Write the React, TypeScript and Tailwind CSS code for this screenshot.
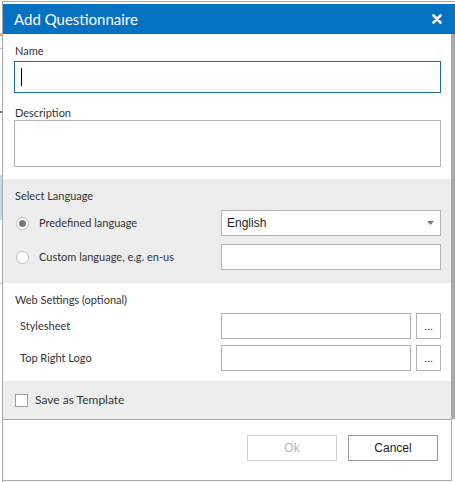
import React from "react";

function Radio({ checked }: { checked?: boolean }) {
  return (
    <span className="flex h-[13px] w-[13px] items-center justify-center rounded-full border border-[#b9b9b9] bg-white">
      {checked && <span className="h-[7px] w-[7px] rounded-full bg-[#7a7a7a]" />}
    </span>
  );
}

function TextBox({ w = "w-[220px]" }: { w?: string }) {
  return <div className={`h-[26px] ${w} border border-[#b4b4b4] bg-white`} />;
}

export default function App() {
  return (
    <div className="flex h-[482px] w-[455px] overflow-hidden bg-white font-['Lato',sans-serif] text-[#333]">
      {/* page behind */}
      <div className="flex w-[2px] flex-col bg-white">
        <div className="h-[33px]" />
        <div className="h-[3px] bg-[#e8a87c]" />
        <div className="h-[12px]" />
        <div className="h-[1px] bg-[#c8c8c8]" />
        <div className="h-[62px]" />
        <div className="h-[2px] bg-[#6a7a8a]" />
        <div className="h-[62px]" />
        <div className="h-[45px] bg-[#c9d9ea]" />
        <div className="h-[63px]" />
        <div className="h-[1px] bg-[#c8c8c8]" />
      </div>
      {/* modal */}
      <div className="mt-[1px] flex w-[453px] flex-col border-l border-t border-[#a9a9a9]">
        <div className="h-[2px] bg-white" />
        <div className="flex h-[30px] items-center justify-between bg-[#0571c1] pl-[11px] pr-[13px]">
          <span className="text-[15px] leading-none text-white">Add Questionnaire</span>
          <svg width="10" height="10" viewBox="0 0 10 10">
            <path d="M1.5 1.5 L8.5 8.5 M8.5 1.5 L1.5 8.5" stroke="white" strokeWidth="2.6" strokeLinecap="round" />
          </svg>
        </div>
        <div className="flex">
          <div className="flex w-[448px] flex-col">
            {/* Name / Description */}
            <div className="flex flex-col pl-[11px] pr-[10px] pt-[10px]">
              <div className="h-[17px] pl-[1px] text-[11px] leading-[14px]">Name</div>
              <div className="flex h-[32px] items-center border border-[#1d6a96] pl-[6px]">
                <span className="h-[18px] w-[1px] bg-black" />
              </div>
              <div className="mt-[13px] h-[14px] pl-[1px] text-[11px] leading-[14px]">Description</div>
              <div className="h-[47px] border border-[#b4b4b4]" />
            </div>
            {/* Select language */}
            <div className="mt-[12px] flex h-[104px] flex-col bg-[#ededed] pl-[11px] pr-[10px]">
              <div className="mt-[10px] h-[14px] pl-[1px] text-[11px] leading-[14px]">Select Language</div>
              <div className="mt-[7px] flex h-[26px] items-center">
                <div className="flex flex-1 items-center pl-[2px]">
                  <Radio checked />
                  <span className="ml-[10px] text-[11px]">Predefined language</span>
                </div>
                <div className="flex h-[26px] w-[220px] items-center justify-between border border-[#b4b4b4] bg-white pl-[5px] pr-[6px]">
                  <span className="font-['Liberation_Sans',Arial,sans-serif] text-[12px] text-[#222]">English</span>
                  <svg width="7" height="4" viewBox="0 0 7 4">
                    <path d="M0 0 L7 0 L3.5 4 Z" fill="#7a7a7a" />
                  </svg>
                </div>
              </div>
              <div className="mt-[8px] flex h-[26px] items-center">
                <div className="flex flex-1 items-center pl-[2px]">
                  <Radio />
                  <span className="ml-[10px] text-[11px]">Custom language, e.g. en-us</span>
                </div>
                <TextBox />
              </div>
            </div>
            {/* Web settings */}
            <div className="flex h-[98px] flex-col pl-[11px] pr-[10px]">
              <div className="mt-[10px] h-[14px] pl-[1px] text-[11px] leading-[14px]">Web Settings (optional)</div>
              <div className="mt-[6px] flex h-[26px] items-center">
                <span className="flex-1 pl-[6px] text-[11px]">Stylesheet</span>
                <TextBox w="w-[190px]" />
                <div className="ml-[5px] flex h-[26px] w-[25px] items-center justify-center border border-[#b4b4b4] bg-white font-['Liberation_Sans',Arial,sans-serif] text-[11px] leading-none text-[#333]">...</div>
              </div>
              <div className="mt-[6px] flex h-[26px] items-center">
                <span className="flex-1 pl-[6px] text-[11px]">Top Right Logo</span>
                <TextBox w="w-[190px]" />
                <div className="ml-[5px] flex h-[26px] w-[25px] items-center justify-center border border-[#b4b4b4] bg-white font-['Liberation_Sans',Arial,sans-serif] text-[11px] leading-none text-[#333]">...</div>
              </div>
            </div>
            {/* Save as template */}
            <div className="flex h-[38px] items-center bg-[#ededed] pl-[12px]">
              <span className="h-[13px] w-[13px] border border-[#9c9c9c] bg-white" />
              <span className="ml-[7px] text-[12px]">Save as Template</span>
            </div>
          </div>
          <div className="w-[4px] bg-[#a9a9a9]" />
        </div>
        {/* footer */}
        <div className="flex h-[62px] w-[449px] items-start justify-end gap-[11px] border-b border-r border-t border-[#a9a9a9] bg-white pr-[13px] pt-[15px]">
          <button className="h-[26px] w-[90px] border border-[#cfcfcf] bg-white font-['Liberation_Sans',Arial,sans-serif] text-[12px] text-[#b5b5b5]">Ok</button>
          <button className="h-[26px] w-[90px] border border-[#9a9a9a] bg-white font-['Liberation_Sans',Arial,sans-serif] text-[12px] text-[#222]">Cancel</button>
        </div>
      </div>
    </div>
  );
}
